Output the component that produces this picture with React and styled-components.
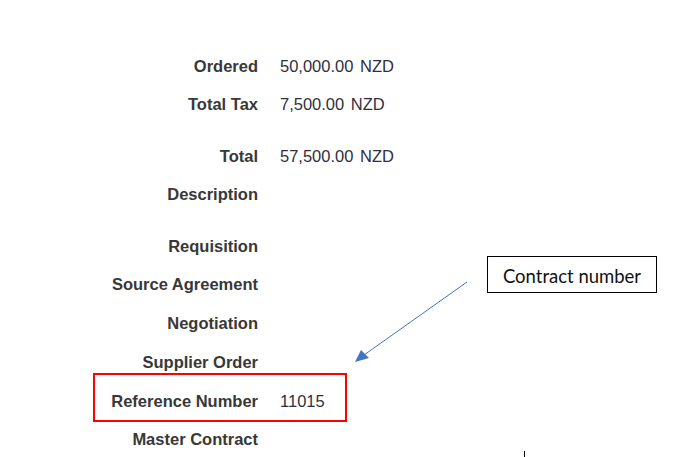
import React from 'react';
import styled, { createGlobalStyle } from 'styled-components';

const GlobalStyle = createGlobalStyle`
    html, body {
        margin: 0;
        padding: 0;
        background: #ffffff;
    }
    body {
        font-family: "Liberation Sans", Arial, sans-serif;
    }
`;

const Page = styled.div`
    position: relative;
    width: 674px;
    height: 457px;
    overflow: hidden;
    background: #ffffff;
`;

const Details = styled.dl`
    margin: 0;
    padding-top: 46.5px;
    display: grid;
    grid-template-columns: 258px auto;
    column-gap: 22px;
    justify-content: start;
`;

const Label = styled.dt`
    margin: 0;
    margin-top: ${p => (p.$spaced ? '12.5px' : '0')};
    height: 38.75px;
    line-height: 38.75px;
    text-align: right;
    font-size: 16.5px;
    font-weight: 700;
    color: #383838;
    white-space: nowrap;
`;

const Value = styled.dd`
    margin: 0;
    margin-top: ${p => (p.$spaced ? '12.5px' : '0')};
    height: 38.75px;
    line-height: 38.75px;
    font-size: 16.5px;
    color: #30303c;
    white-space: nowrap;
    word-spacing: 2px;
`;

const Highlight = styled.div`
    position: absolute;
    left: 93px;
    top: 373px;
    width: 250px;
    height: 45px;
    border: 2px solid #ff0000;
`;

const Callout = styled.div`
    position: absolute;
    left: 487px;
    top: 256px;
    width: 168px;
    height: 33px;
    padding-top: 2px;
    box-sizing: content-box;
    border: 1px solid #000000;
    display: flex;
    align-items: center;
    justify-content: center;
    font-family: Lato, "Open Sans", sans-serif;
    font-size: 18.5px;
    color: #111111;
`;

const Overlay = styled.svg`
    position: absolute;
    left: 0;
    top: 0;
    pointer-events: none;
`;

const rows = [
    { label: 'Ordered', value: '50,000.00 NZD' },
    { label: 'Total Tax', value: '7,500.00 NZD' },
    { label: 'Total', value: '57,500.00 NZD', spaced: true },
    { label: 'Description' },
    { label: 'Requisition', spaced: true },
    { label: 'Source Agreement' },
    { label: 'Negotiation' },
    { label: 'Supplier Order' },
    { label: 'Reference Number', value: '11015' },
    { label: 'Master Contract' },
];

export default function App() {
    return (
        <Page>
            <GlobalStyle />
            <Details>
                {rows.map(r => (
                    <React.Fragment key={r.label}>
                        <Label $spaced={r.spaced}>{r.label}</Label>
                        <Value $spaced={r.spaced}>{r.value || ''}</Value>
                    </React.Fragment>
                ))}
            </Details>
            <Highlight />
            <Callout>Contract number</Callout>
            <Overlay width="674" height="457" viewBox="0 0 674 457">
                <line x1="467" y1="282" x2="364" y2="355" stroke="#4472c4" strokeWidth="1" />
                <polygon points="355,362 361,350 369,358" fill="#4472c4" />
                <line x1="524.5" y1="451" x2="524.5" y2="457" stroke="#000" strokeWidth="1" />
            </Overlay>
        </Page>
    );
}
